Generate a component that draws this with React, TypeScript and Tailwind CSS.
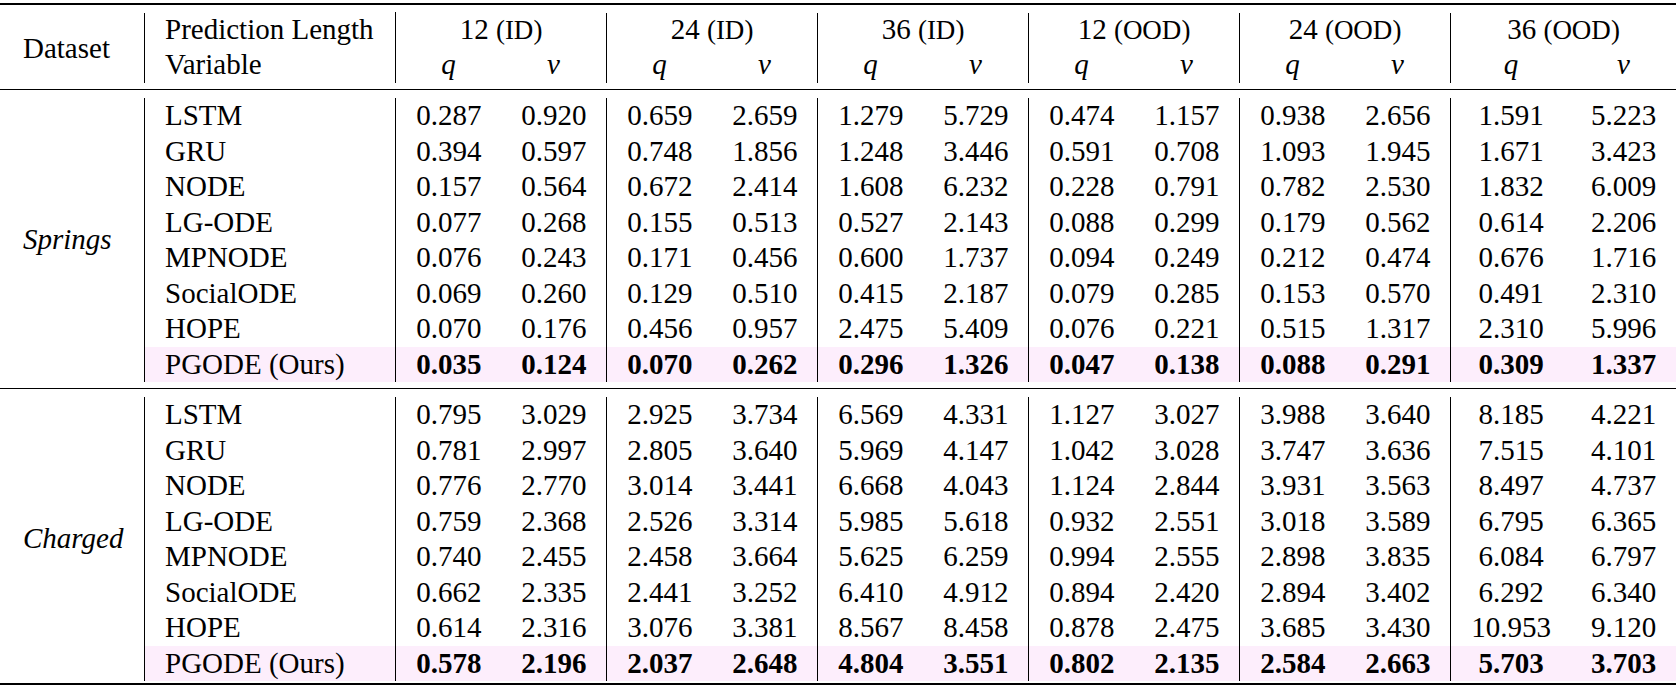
import React from 'react';

const groups = ['12', '24', '36', '12', '24', '36'];
const tags = ['ID', 'ID', 'ID', 'OOD', 'OOD', 'OOD'];

const springs: string[][] = [
  ['LSTM', '0.287', '0.920', '0.659', '2.659', '1.279', '5.729', '0.474', '1.157', '0.938', '2.656', '1.591', '5.223'],
  ['GRU', '0.394', '0.597', '0.748', '1.856', '1.248', '3.446', '0.591', '0.708', '1.093', '1.945', '1.671', '3.423'],
  ['NODE', '0.157', '0.564', '0.672', '2.414', '1.608', '6.232', '0.228', '0.791', '0.782', '2.530', '1.832', '6.009'],
  ['LG-ODE', '0.077', '0.268', '0.155', '0.513', '0.527', '2.143', '0.088', '0.299', '0.179', '0.562', '0.614', '2.206'],
  ['MPNODE', '0.076', '0.243', '0.171', '0.456', '0.600', '1.737', '0.094', '0.249', '0.212', '0.474', '0.676', '1.716'],
  ['SocialODE', '0.069', '0.260', '0.129', '0.510', '0.415', '2.187', '0.079', '0.285', '0.153', '0.570', '0.491', '2.310'],
  ['HOPE', '0.070', '0.176', '0.456', '0.957', '2.475', '5.409', '0.076', '0.221', '0.515', '1.317', '2.310', '5.996'],
  ['PGODE (Ours)', '0.035', '0.124', '0.070', '0.262', '0.296', '1.326', '0.047', '0.138', '0.088', '0.291', '0.309', '1.337'],
];

const charged: string[][] = [
  ['LSTM', '0.795', '3.029', '2.925', '3.734', '6.569', '4.331', '1.127', '3.027', '3.988', '3.640', '8.185', '4.221'],
  ['GRU', '0.781', '2.997', '2.805', '3.640', '5.969', '4.147', '1.042', '3.028', '3.747', '3.636', '7.515', '4.101'],
  ['NODE', '0.776', '2.770', '3.014', '3.441', '6.668', '4.043', '1.124', '2.844', '3.931', '3.563', '8.497', '4.737'],
  ['LG-ODE', '0.759', '2.368', '2.526', '3.314', '5.985', '5.618', '0.932', '2.551', '3.018', '3.589', '6.795', '6.365'],
  ['MPNODE', '0.740', '2.455', '2.458', '3.664', '5.625', '6.259', '0.994', '2.555', '2.898', '3.835', '6.084', '6.797'],
  ['SocialODE', '0.662', '2.335', '2.441', '3.252', '6.410', '4.912', '0.894', '2.420', '2.894', '3.402', '6.292', '6.340'],
  ['HOPE', '0.614', '2.316', '3.076', '3.381', '8.567', '8.458', '0.878', '2.475', '3.685', '3.430', '10.953', '9.120'],
  ['PGODE (Ours)', '0.578', '2.196', '2.037', '2.648', '4.804', '3.551', '0.802', '2.135', '2.584', '2.663', '5.703', '3.703'],
];

// column widths taken from the rule positions in the figure
const cols = 'grid grid-cols-[145px_251px_repeat(10,105.5px)_120px_105px]';

function Section({ name, rows }: { name: string; rows: string[][] }) {
  return (
    <div className={`${cols} grid-rows-[repeat(8,35.5px)]`}>
      <div className="row-span-8 flex items-center border-r border-black pl-[23px] italic">{name}</div>
      {rows.map((r, ri) => {
        const ours = ri === rows.length - 1;
        return (
          <React.Fragment key={ri}>
            <div className={`border-r border-black pl-[20px] ${ours ? 'bg-[#fdeefc]' : ''}`}>{r[0]}</div>
            {r.slice(1).map((v, i) => (
              <div
                key={i}
                className={`text-center ${i % 2 === 1 && i < 10 ? 'border-r border-black' : ''} ${
                  ours ? 'bg-[#fdeefc] font-bold' : ''
                }`}
              >
                {v}
              </div>
            ))}
          </React.Fragment>
        );
      })}
    </div>
  );
}

export default function App() {
  return (
    <div className="w-[1679px] h-[689px] bg-white text-black font-['Liberation_Serif',serif] text-[29px] leading-[35.5px]">
      <div className="w-[1676px] pt-[3px]">
        {/* top rule */}
        <div className="h-[2px] bg-black" />
        <div className="pt-[8px] pb-[6px]">
          <div className={`${cols} grid-rows-[35px_35px] leading-[35px]`}>
            <div className="row-span-2 flex items-center border-r border-black pl-[23px]">Dataset</div>
            <div className="row-span-2 border-r border-black pl-[20px] -mt-[1px]">
              <div>Prediction Length</div>
              <div>Variable</div>
            </div>
            {groups.map((g, i) => (
              <div
                key={i}
                className={`row-span-2 ${i < 5 ? 'col-span-2 border-r border-black' : 'col-span-2'}`}
              >
                <div className="text-center -mt-[1px]">
                  {g} <span className="text-[27px]">({tags[i]})</span>
                </div>
                <div className={`grid ${i < 5 ? 'grid-cols-2' : 'grid-cols-[120px_105px]'} italic -mt-[1px]`}>
                  <div className="text-center">q</div>
                  <div className="text-center">v</div>
                </div>
              </div>
            ))}
          </div>
        </div>
        <div className="h-px bg-black" />
        <div className="pt-[8px] pb-[6px]">
          <Section name="Springs" rows={springs} />
        </div>
        <div className="h-px bg-black" />
        <div className="pt-[8px] pb-[2px]">
          <Section name="Charged" rows={charged} />
        </div>
        <div className="h-[2px] bg-black" />
      </div>
    </div>
  );
}
